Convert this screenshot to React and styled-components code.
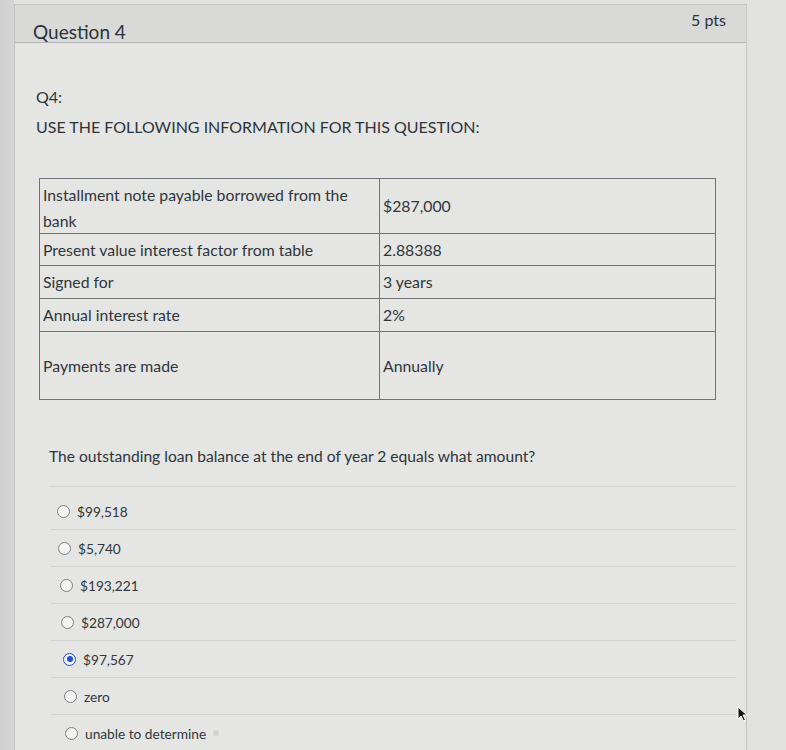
import React from 'react'
import styled, { createGlobalStyle } from 'styled-components'

const Global = createGlobalStyle`
    body {
        margin: 0;
        background: #d9d9d8;
        font-family: Lato, "Noto Sans", sans-serif;
    }
`

const Page = styled.div`
    width: 786px;
    height: 750px;
    overflow: hidden;
    position: relative;
    background: linear-gradient(90deg, #cfcfcf 0, #d6d6d6 14px, #e2e2e0 14px);
    padding-top: 4px;
    box-sizing: border-box;
`

const Card = styled.div`
    margin-left: 14px;
    width: 731px;
    border: 1px solid #c4c5c6;
    border-bottom: none;
    background: #e5e5e3;
`

const Header = styled.div`
    height: 37px;
    background: #d9d9d8;
    border-bottom: 1px solid #b3b4b5;
    display: flex;
    justify-content: space-between;
    padding: 0 20px 0 18px;
`

const Title = styled.h2`
    margin: 15px 0 0;
    font-size: 19px;
    font-weight: 400;
    color: #2b3238;
`

const Points = styled.span`
    margin-top: 5px;
    font-size: 16px;
    color: #2b3238;
`

const Body = styled.div`
    padding: 44px 10px 0 21px;
    color: #2d343a;
`

const Para = styled.p`
    margin: 0 0 ${(p) => p.gap || 0}px;
    font-size: 16px;
    line-height: 20px;
`

const Table = styled.table`
    border-collapse: collapse;
    width: 677px;
    margin-left: 3px;
    font-size: 15.8px;
    color: #2f363c;
`

const Cell = styled.td`
    border: 1.5px solid #6f7377;
    padding: ${(p) => (p.align === 'top' ? '3px 30px 0 3px' : '1px 30px 1px 3px')};
    height: ${(p) => p.h}px;
    vertical-align: ${(p) => p.align || 'middle'};
    text-align: left;
    line-height: 25.5px;
    width: ${(p) => p.w || 'auto'};
    box-sizing: border-box;
`

const Question = styled.p`
    margin: 46px 0 0 13px;
    font-size: 15.6px;
    line-height: 20px;
    padding-bottom: 20px;
    border-bottom: 1px solid #cfd1d2;
`

const Answers = styled.div`
    margin-left: 15px;
    margin-top: 6px;
`

const Answer = styled.label`
    display: flex;
    align-items: center;
    gap: 7px;
    height: 36px;
    border-bottom: 1px solid ${(p) => (p.last ? 'transparent' : '#cfd1d2')};
    padding-left: ${(p) => 6 + p.shift}px;
    font-size: 13.7px;
    color: #30373d;
`

const Radio = styled.span`
    width: 13px;
    height: 13px;
    border-radius: 50%;
    border: 1.5px solid #7b8085;
    background: #f4f4f3;
    box-sizing: border-box;
    display: flex;
    align-items: center;
    justify-content: center;
    &::after {
        content: '';
        width: 6px;
        height: 6px;
        border-radius: 50%;
        background: ${(p) => (p.checked ? '#1f4fc9' : 'transparent')};
    }
    ${(p) => p.checked && 'border-color: #1f4fc9;'}
`

const Dot = styled.span`
    width: 6px;
    height: 6px;
    border-radius: 50%;
    background: #d0d2d4;
`

const Cursor = styled.svg`
    position: absolute;
    left: 736px;
    top: 706px;
`

const rows = [
    ['Installment note payable borrowed from the bank', '$287,000', 54],
    ['Present value interest factor from table', '2.88388', 32],
    ['Signed for', '3 years', 33],
    ['Annual interest rate', '2%', 33],
    ['Payments are made', 'Annually', 68],
]

const answers = ['$99,518', '$5,740', '$193,221', '$287,000', '$97,567', 'zero', 'unable to determine']

const App = () => {
    return (
        <Page>
            <Global />
            <Card>
                <Header>
                    <Title>Question 4</Title>
                    <Points>5 pts</Points>
                </Header>
                <Body>
                    <Para gap={10}>Q4:</Para>
                    <Para gap={41}>USE THE FOLLOWING INFORMATION FOR THIS QUESTION:</Para>
                    <Table>
                        <tbody>
                            {rows.map(([k, v, h], i) => (
                                <tr key={k}>
                                    <Cell h={h} w="340px" align={i === 0 ? 'top' : 'middle'}>{k}</Cell>
                                    <Cell h={h}>{v}</Cell>
                                </tr>
                            ))}
                        </tbody>
                    </Table>
                    <Question>The outstanding loan balance at the end of year 2 equals what amount?</Question>
                    <Answers>
                        {answers.map((a, i) => (
                            <Answer key={a} last={i === answers.length - 1} shift={Math.round(i * 1.4)}>
                                <Radio checked={a === '$97,567'} />
                                {a}
                                {a === 'unable to determine' && <Dot />}
                            </Answer>
                        ))}
                    </Answers>
                </Body>
            </Card>
            <Cursor width="12" height="16" viewBox="0 0 12 16">
                <path d="M2 1 L2 13 L5 10 L7.5 15 L9.5 14 L7 9 L11 9 Z" fill="#111" stroke="#fff" strokeWidth="1" />
            </Cursor>
        </Page>
    )
}

export default App
